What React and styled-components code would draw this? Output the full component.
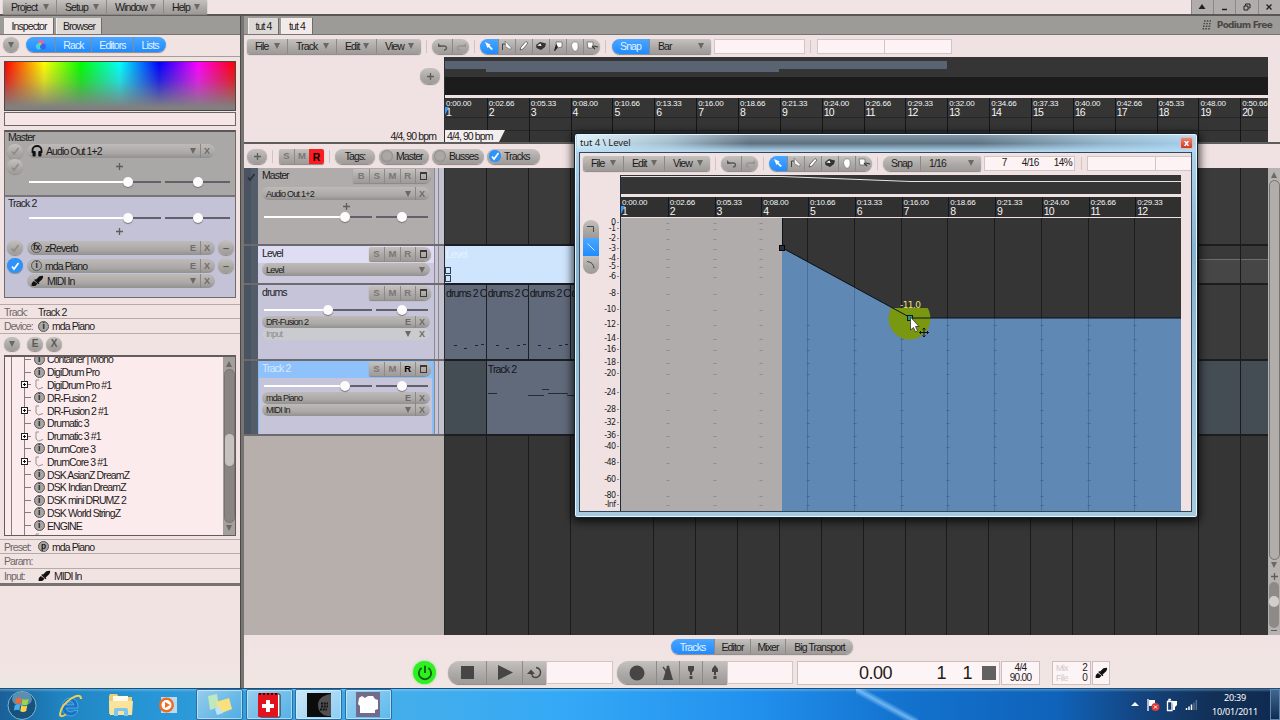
import React from "react";
import styled, { createGlobalStyle, css } from "styled-components";

const GlobalStyle = createGlobalStyle`
  * {
    box-sizing: border-box;
  }
  body {
    margin: 0;
    overflow: hidden;
    background: #f1e3e3;
    font-family: "Liberation Sans", Arial, sans-serif;
    font-size: 10.5px;
    letter-spacing: -0.9px;
    line-height: 12px;
    color: #1d1b1b;
    white-space: nowrap;
  }
  svg {
    display: block;
    flex: none;
  }
`;

const grey = "linear-gradient(#c4c1bf, #aaa7a5 60%, #9d9a98)";
const blue = "linear-gradient(#4ba6ff, #1f8cff)";

const Screen = styled.div`
  position: relative;
  display: flex;
  flex-direction: column;
  width: 1280px;
  height: 720px;
  overflow: hidden;
`;

/* shared parts */

const Gap = styled.div`
  flex: none;
  width: ${(p) => p.$w || 0}px;
  height: ${(p) => p.$h || 0}px;
`;

const Divider = styled.div`
  flex: none;
  width: 1px;
  height: 13px;
  background: #cfc4c4;
  margin-left: ${(p) => p.$left || 0}px;
  margin-right: ${(p) => p.$right || 0}px;
`;

const Arrow = styled.span`
  flex: none;
  width: 0;
  height: 0;
  border: 3.5px solid transparent;
  border-top: 6px solid ${(p) => p.$color || "#6b6866"};
  border-bottom: 0;
`;

const Group = styled.div`
  display: flex;
  flex: none;
  height: ${(p) => p.$h || 15}px;
  border-radius: ${(p) => p.$radius || "8px"};
  overflow: hidden;
  box-shadow: 0 1px 1px #8b8785;
`;

const Segment = styled.div`
  display: flex;
  align-items: center;
  justify-content: ${(p) => (p.$spread ? "space-between" : "center")};
  flex: none;
  width: ${(p) => p.$w}px;
  padding: ${(p) => (p.$spread ? "0 7px 0 8px" : 0)};
  background: ${(p) => (p.$active ? blue : grey)};
  color: ${(p) => (p.$active ? "#e4f1ff" : "#1d1b1b")};

  & + & {
    border-left: 1px solid ${(p) => (p.$active ? "#60adff" : "#8c8987")};
  }
`;

const Round = styled.div`
  display: flex;
  align-items: center;
  justify-content: center;
  flex: none;
  width: ${(p) => p.$w || 16}px;
  height: ${(p) => p.$h || 15}px;
  border-radius: 8px;
  background: ${(p) => (p.$on ? "#2d93fb" : grey)};
  color: #5c5957;
  box-shadow: 0 1px 1px #918d8b;
  font-weight: ${(p) => (p.$bold ? "bold" : "normal")};
  font-size: ${(p) => p.$font || 10}px;
  letter-spacing: 0;
`;

const Field = styled.div`
  display: flex;
  align-items: center;
  flex: none;
  width: ${(p) => p.$w}px;
  height: ${(p) => p.$h || 15}px;
  border: 1px solid #d3c5c6;
  background: #fdf2f4;

  & + & {
    border-left: 0;
  }
`;

const SliderTrack = styled.div`
  position: relative;
  flex: none;
  width: ${(p) => p.$w}px;
  height: 2px;
  background: #62616b;
`;

const SliderFill = styled.div`
  width: ${(p) => p.$w}px;
  height: 2px;
  background: #fff;
`;

const Knob = styled.div`
  position: absolute;
  top: -4px;
  left: ${(p) => p.$x - 5}px;
  width: 10px;
  height: 10px;
  border-radius: 5px;
  background: #fdfbfb;
  box-shadow: 0 1px 1px #77747a;
`;

const SliderLine = styled.div`
  display: flex;
  align-items: center;
  flex: none;
  gap: 4px;
  height: 10px;
  margin-left: ${(p) => p.$left}px;
`;

const Slider = ({ w, at, filled }) => (
  <SliderTrack $w={w}>
    {filled && <SliderFill $w={at} />}
    <Knob $x={at} />
  </SliderTrack>
);

const Sliders = ({ left, w, at, w2, at2 }) => (
  <SliderLine $left={left}>
    <Slider w={w} at={at} filled />
    <Slider w={w2} at={at2} />
  </SliderLine>
);

/* icons */

const Check = ({ color = "#fff" }) => (
  <svg width="10" height="10" viewBox="0 0 10 10">
    <path d="M2 5.500 4 8 8.500 2" stroke={color} strokeWidth="1.7" fill="none" />
  </svg>
);

const Plus = () => (
  <svg width="7" height="7" viewBox="0 0 7 7">
    <path d="M3.500 0V7M0 3.500H7" stroke="#5f5c5b" strokeWidth="1.3" />
  </svg>
);

const PlugIcon = () => (
  <svg width="13" height="12" viewBox="0 0 14 12">
    <path d="M5 5 9 1q3-1 4-.5Q13.500 3 10 6L8 8Z" fill="#111" />
    <path d="M3 6 7 9 5 11Q2 12 .5 11 0 8 3 6Z" fill="#111" />
    <path d="M4 4.500 8.500 9" stroke="#111" strokeWidth="1.5" />
  </svg>
);

const HeadphonesIcon = () => (
  <svg width="12" height="12" viewBox="0 0 12 12">
    <path d="M1.500 8V5a4.500 4 0 0 1 9 0V8" stroke="#111" strokeWidth="1.800" fill="none" />
    <rect x="1.500" y="6" width="3.200" height="5.500" rx="1" fill="#111" />
    <rect x="7.300" y="6" width="3.200" height="5.500" rx="1" fill="#111" />
  </svg>
);

const Badge = styled.span`
  display: flex;
  align-items: center;
  justify-content: center;
  flex: none;
  width: 11px;
  height: 11px;
  border: 1px solid #555;
  border-radius: 6px;
  background: #a9a5a4;
  color: #1b1919;
  font-size: 8.5px;
  font-weight: bold;
  letter-spacing: -0.3px;
  line-height: 9px;
`;

const FolderIcon = () => (
  <svg width="11" height="11" viewBox="0 0 11 11">
    <path d="M2 1V8L4.500 10 9 8.500M2 1H5" stroke="#989292" fill="none" />
  </svg>
);

const UndoIcon = ({ flip, color = "#5c5958" }) => (
  <svg width="11" height="9" viewBox="0 0 11 9">
    <g transform={flip ? "translate(11 0) scale(-1 1)" : undefined}>
      <path d="M2 4H7q2.500 0 2.500 2T7 8" stroke={color} strokeWidth="1.300" fill="none" />
      <path d="M1 1V5H5Z" fill={color} />
    </g>
  </svg>
);

const toolShapes = {
  pointer: <path d="M2 2 7.500 4.500 6.500 5.500 10 9 8.500 10 5.500 7 4.500 8Z" fill="#fff" />,
  range: (
    <>
      <path d="M1.500 4V10M1.500 4H4" stroke="#444" fill="none" />
      <path d="M4 1 10 7.500 9.500 10 7.500 8 5 7.500Z" fill="#fff" stroke="#555" strokeWidth=".5" />
    </>
  ),
  pencil: <path d="M2 10 3 7 8 1.500 10 3 5 9Z" fill="#fff" stroke="#444" strokeWidth=".7" />,
  eraser: (
    <>
      <path d="M1 5 5 2 11 3.500 10 7 6 10 1.500 8Z" fill="#333" />
      <path d="M2 5.500 5.500 3.500 6.500 6Z" fill="#fff" />
    </>
  ),
  brush: (
    <>
      <path d="M4 2H10V7L5 8Z" fill="#fff" stroke="#444" strokeWidth=".6" />
      <path d="M4 4 6 7 3 11H2Z" fill="#222" />
    </>
  ),
  hand: <path d="M2.500 5 4 2H8L9 4V8L7.500 11H5L3 8Z" fill="#fff" stroke="#666" strokeWidth=".5" />,
  zoom: (
    <>
      <path d="M1 2H7V8H2Z" fill="#fff" stroke="#444" strokeWidth=".6" />
      <path d="M6 6 9 9M8 6 12 7" stroke="#333" strokeWidth="1.200" />
    </>
  ),
};

const Tools = ({ names, width }) => (
  <Group>
    {names.map((name, i) => (
      <Segment key={name} $w={i === 0 ? 18 : width} $active={i === 0}>
        <svg width="12" height="12" viewBox="0 0 12 12">
          {toolShapes[name]}
        </svg>
      </Segment>
    ))}
  </Group>
);

const Undo = () => (
  <Group>
    <Segment $w={20}>
      <UndoIcon />
    </Segment>
    <Segment $w={17}>
      <UndoIcon flip color="#979391" />
    </Segment>
  </Group>
);

const Menus = ({ items, radius, h }) => (
  <Group $radius={radius || "3px"} $h={h}>
    {items.map(([label, w]) => (
      <Segment key={label} $w={w} $spread>
        {label}
        <Arrow />
      </Segment>
    ))}
  </Group>
);

/* top of the window */

const MenuBar = styled.div`
  display: flex;
  justify-content: space-between;
  height: 16px;
  padding-left: 3px;
  border-bottom: 2px solid #595756;
  background: #f2e3e5;
`;

const WindowButtons = styled.div`
  display: flex;
`;

const WindowButton = styled.div`
  display: flex;
  align-items: center;
  justify-content: center;
  width: 22.3px;
  height: 14px;
  background: #b0adab;
  border-left: 1px solid #8a8785;
`;

const Workspace = styled.div`
  display: flex;
  height: 672px;
`;

const TabBar = styled.div`
  display: flex;
  align-items: flex-end;
  gap: 2px;
  height: 19px;
  padding-left: 4px;
  background: #9d9b98;
  border-bottom: 1px solid #777472;
`;

const Tab = styled.div`
  width: ${(p) => p.$w}px;
  height: 16px;
  padding-top: 2px;
  text-align: center;
  background: ${(p) => (p.$active ? "#f3eaea" : "#dcd9d7")};
  border-left: 1px solid #f5efef;
  border-right: 1px solid #6e6b69;
`;

const Brand = styled.div`
  display: flex;
  align-items: center;
  gap: 5px;
  height: 18px;
  margin: 0 8px 0 auto;
  font-family: "DejaVu Sans", sans-serif;
  font-size: 9px;
  font-weight: bold;
  letter-spacing: -0.75px;
  color: #4a4846;
`;

/* inspector */

const Inspector = styled.div`
  display: flex;
  flex-direction: column;
  width: 240px;
  background: #f2e3e3;
`;

const Splitter = styled.div`
  width: 4px;
  background: #777472;
  border-left: 1px solid #4b4949;
`;

const InspectorTools = styled.div`
  display: flex;
  align-items: center;
  height: 22px;
  padding: 0 0 2px 3px;
  border-bottom: 1px solid #a69d9d;
`;

const Spectrum = styled.div`
  height: 50px;
  margin: 4px 4px 0;
  border: 1px solid #4b4646;
  background:
    linear-gradient(rgba(128, 128, 128, 0), rgba(128, 128, 128, 0.3) 40%, #808080 95%),
    linear-gradient(90deg, #f00, #ff0 17%, #0f0 33%, #0ff 50%, #00f 67%, #f0f 84%, #f00);
`;

const Swatch = styled.div`
  height: 14px;
  margin: 1px 4px 4px;
  border: 1px solid #6c6666;
  background: #f5e5e6;
`;

const Chain = styled.div`
  flex: none;
  height: 168px;
  margin: 0 4px;
  border: 1px solid #6f6b6b;
  border-top: 2px solid #5a5757;
  background: #c3c2d6;
`;

const ChainPart = styled.div`
  height: ${(p) => p.$h}px;
  padding: 0 2px;
  background: ${(p) => p.$bg};
  border-bottom: ${(p) => (p.$line ? "2px solid #77757a" : 0)};
`;

const ChainTitle = styled.div`
  height: 12px;
  padding-left: 1px;
  line-height: 11px;
`;

const ChainRow = styled.div`
  display: flex;
  align-items: center;
  height: ${(p) => p.$h}px;
`;

const Slot = styled.div`
  display: flex;
  align-items: center;
  gap: 3px;
  flex: none;
  width: ${(p) => p.$w || 188}px;
  height: ${(p) => p.$h || 14}px;
  margin-left: ${(p) => p.$left ?? 4}px;
  padding-left: 4px;
  border-radius: 7px;
  background: ${(p) => (p.$empty ? "#c9cbce" : "linear-gradient(#bdbab8, #aaa7a6 65%, #929090)")};
  color: ${(p) => (p.$empty ? "#8d8b90" : "#1b1919")};
  font-size: ${(p) => (p.$small ? 9 : 10.5)}px;
  letter-spacing: ${(p) => (p.$small ? -0.75 : -0.9)}px;
`;

const SlotKey = styled.span`
  display: flex;
  align-items: center;
  justify-content: center;
  width: 15px;
  height: 100%;
  padding-right: ${(p) => p.$right || 0}px;
  margin-left: ${(p) => (p.$first ? "auto" : "-3px")};
  color: #6d6a69;
  font-weight: bold;
  font-size: 9px;
  letter-spacing: 0;
  border-left: 1px solid ${(p) => (p.$first || p.$plain ? "transparent" : "#8a8786")};
`;

const ChainSlot = ({ icon, label, edit, on, knob = true, minus }) => (
  <>
    {knob ? (
      <Round $on={on}>
        <Check color={on ? "#fff" : "#8e8b8a"} />
      </Round>
    ) : (
      <Gap $w={16} />
    )}
    <Slot>
      {icon}
      {label}
      <SlotKey $first>{edit ? "E" : <Arrow />}</SlotKey>
      <SlotKey $right={2}>X</SlotKey>
    </Slot>
    {minus && (
      <>
        <Gap $w={3} />
        <Round $bold $font={11}>
          –
        </Round>
      </>
    )}
  </>
);

const InfoRow = styled.div`
  display: flex;
  align-items: center;
  flex: none;
  gap: 3px;
  height: ${(p) => p.$h || 14}px;
  padding-left: 4px;
  border-top: 1px solid #b9aaaa;
`;

const InfoLabel = styled.span`
  width: 31px;
  color: #6f6768;
`;

const Tree = styled.div`
  display: flex;
  flex: none;
  height: 181px;
  margin: 1px 4px 3px;
  border: 1px solid #625c5c;
  border-top-width: 2px;
  background: #fbebed;
  overflow: hidden;
`;

const TreeGutter = styled.div`
  width: 7px;
  border-right: 1px solid #857d7d;
`;

const TreeBody = styled.div`
  flex: 1;
  margin: -4px 0 0 12px;
  border-left: 1px solid #857d7d;
`;

const TreeRow = styled.div`
  display: flex;
  align-items: center;
  gap: 2.5px;
  height: 12.8px;
`;

const TreeBranch = styled.div`
  width: 6px;
  height: 1px;
  background: #857d7d;
`;

const Expander = styled.div`
  display: flex;
  align-items: center;
  justify-content: center;
  flex: none;
  width: 7px;
  height: 7px;
  margin: 0 -5.5px 0 -4px;
  border: 1px solid #222;
  background: #fff;
  z-index: 1;
`;

const devices = [
  ["Container | Mono"],
  ["DigiDrum Pro"],
  ["DigiDrum Pro #1", true],
  ["DR-Fusion 2"],
  ["DR-Fusion 2 #1", true],
  ["Drumatic 3"],
  ["Drumatic 3 #1", true],
  ["DrumCore 3"],
  ["DrumCore 3 #1", true],
  ["DSK AsianZ DreamZ"],
  ["DSK Indian DreamZ"],
  ["DSK mini DRUMZ 2"],
  ["DSK World StringZ"],
  ["ENGINE"],
  ["ENGINE #1", true],
];

const ScrollBar = styled.div`
  display: flex;
  flex-direction: column;
  align-items: center;
  flex: none;
  width: 12px;
  padding: 4px 0;
  background: ${(p) => p.$bg || "#a29f9d"};
`;

const ScrollArrow = styled.div`
  width: 0;
  height: 0;
  border: 3.5px solid transparent;
  border-${(p) => (p.$up ? "bottom" : "top")}: 6px solid #6b6866;
  border-${(p) => (p.$up ? "top" : "bottom")}: 0;
`;

const ScrollLane = styled.div`
  flex: 1;
  width: 11px;
  margin: 2px 0;
  padding-top: ${(p) => p.$top || 0}px;
  border-radius: 6px;
  background: ${(p) => p.$bg || "#898583"};
  border: 1px solid #777371;
`;

const ScrollThumb = styled.div`
  height: ${(p) => p.$h}px;
  border-radius: 5px;
  background: #c6c2c0;
`;

const EmptyPanel = styled.div`
  flex: 1;
  border-top: 3px solid #777272;
  background: linear-gradient(#f2e3e3 80%, #e9e8e1);
`;

const InspectorPanel = () => (
  <Inspector>
    <TabBar>
      <Tab $w={50} $active>
        Inspector
      </Tab>
      <Tab $w={46}>Browser</Tab>
    </TabBar>
    <InspectorTools>
      <Round>
        <Arrow />
      </Round>
      <Gap $w={7} />
      <Group>
        <Segment $w={29} $active>
          <svg width="12" height="12" viewBox="0 0 12 12">
            <circle cx="6" cy="4" r="3" fill="#f35bb0" />
            <circle cx="4" cy="7.500" r="3" fill="#37d9e4" />
            <circle cx="8" cy="7.500" r="3" fill="#3967f0" />
            <circle cx="5" cy="5" r="1.500" fill="#75e35b" />
          </svg>
        </Segment>
        <Segment $w={36} $active>
          Rack
        </Segment>
        <Segment $w={42} $active>
          Editors
        </Segment>
        <Segment $w={33} $active>
          Lists
        </Segment>
      </Group>
    </InspectorTools>
    <Spectrum />
    <Swatch />
    <Chain>
      <ChainPart $h={65} $bg="#aaa7a7" $line>
        <ChainTitle>Master</ChainTitle>
        <ChainRow $h={14}>
          <ChainSlot icon={<HeadphonesIcon />} label="Audio Out 1+2" />
        </ChainRow>
        <ChainRow $h={17}>
          <Round>
            <Check color="#8e8b8a" />
          </Round>
          <Gap $w={93} />
          <Plus />
        </ChainRow>
        <Gap $h={2} />
        <Sliders left={22} w={132} at={99} w2={65} at2={33} />
      </ChainPart>
      <ChainPart $h={100} $bg="#c3c2d6">
        <Gap $h={1} />
        <ChainTitle>Track 2</ChainTitle>
        <Gap $h={3} />
        <Sliders left={22} w={132} at={99} w2={65} at2={33} />
        <ChainRow $h={17}>
          <Gap $w={109} />
          <Plus />
        </ChainRow>
        <ChainRow $h={15}>
          <ChainSlot icon={<Badge>fx</Badge>} label="zReverb" edit minus />
        </ChainRow>
        <Gap $h={3} />
        <ChainRow $h={15}>
          <ChainSlot icon={<Badge>i</Badge>} label="mda Piano" edit on minus />
        </ChainRow>
        <ChainRow $h={15}>
          <ChainSlot icon={<PlugIcon />} label="MIDI In" knob={false} />
        </ChainRow>
      </ChainPart>
    </Chain>
    <Gap $h={6} />
    <InfoRow>
      <InfoLabel>Track:</InfoLabel>
      Track 2
    </InfoRow>
    <InfoRow $h={15}>
      <InfoLabel>Device:</InfoLabel>
      <Badge>i</Badge>
      mda Piano
    </InfoRow>
    <InfoRow $h={21}>
      <Round $h={14}>
        <Arrow />
      </Round>
      <Gap $w={1} />
      <Round $h={14} $bold>
        E
      </Round>
      <Round $h={14} $bold>
        X
      </Round>
    </InfoRow>
    <Tree>
      <TreeGutter />
      <TreeBody>
        {devices.map(([name, folder]) => (
          <TreeRow key={name}>
            {folder ? (
              <Expander>
                <svg width="5" height="5">
                  <path d="M2.500 1V4M1 2.500H4" stroke="#111" />
                </svg>
              </Expander>
            ) : null}
            <TreeBranch />
            {folder ? <FolderIcon /> : <Badge>i</Badge>}
            {name}
          </TreeRow>
        ))}
      </TreeBody>
      <ScrollBar>
        <ScrollArrow $up />
        <ScrollLane $top={64}>
          <ScrollThumb $h={32} />
        </ScrollLane>
        <ScrollArrow />
      </ScrollBar>
    </Tree>
    <InfoRow>
      <InfoLabel>Preset:</InfoLabel>
      <Badge>p</Badge>
      mda Piano
    </InfoRow>
    <InfoRow $h={15}>
      <InfoLabel>Param:</InfoLabel>
    </InfoRow>
    <InfoRow $h={15}>
      <InfoLabel>Input:</InfoLabel>
      <PlugIcon />
      MIDI In
    </InfoRow>
    <EmptyPanel />
  </Inspector>
);

/* arrangement */

const Main = styled.div`
  display: flex;
  flex-direction: column;
  width: 1036px;
  background: #f0e2e2;
`;

const Toolbar = styled.div`
  display: flex;
  align-items: center;
  flex: none;
  height: ${(p) => p.$h}px;
  padding-left: ${(p) => p.$left}px;
`;

const Timeline = styled.div`
  display: flex;
  flex: none;
  height: 87px;
  border-bottom: 2px solid #5f5c5c;
`;

const TimelineHead = styled.div`
  display: flex;
  flex-direction: column;
  justify-content: space-between;
  align-items: flex-end;
  width: 200px;
  padding: 11px 4px 0 0;
`;

const HeadTempo = styled.span`
  padding-right: 4px;
`;

const TimelineBody = styled.div`
  width: 824px;
  border-left: 1px solid #2b3038;
`;

const Overview = styled.div`
  height: 38px;
  padding-top: 4px;
  background: linear-gradient(#353535 20px, #1c1c1c 20px);
`;

const OverviewClips = styled.div`
  display: flex;
  align-items: flex-start;
`;

const OverviewClip = styled.div`
  width: ${(p) => p.$w}px;
  height: ${(p) => p.$h}px;
  background: #596371;
`;

const Ruler = styled.div`
  position: relative;
  display: flex;
  height: ${(p) => p.$h}px;
  margin-top: 3px;
  overflow: hidden;
  background: ${(p) =>
    p.$lined
      ? "linear-gradient(#353535 19px, #262626 19px 20px, #353535 20px 32px, #262626 32px 33px, #353535 33px)"
      : "#303030"};
`;

const RulerCell = styled.div`
  flex: none;
  width: ${(p) => p.$w}px;
  padding: 2px 0 0 1px;
  border-left: 1px solid #161616;
  color: #f4f4f4;
  line-height: 9px;

  &:first-child {
    border-left: 0;
  }
`;

const RulerTime = styled.div`
  font-size: 8px;
  letter-spacing: -0.2px;
  line-height: 8px;
`;

const Playhead = styled.div`
  position: absolute;
  left: 0;
  top: 9px;
  border-top: 8px solid #3c97f5;
  border-right: 4px solid transparent;
`;

const Tempo = styled.div`
  position: absolute;
  left: 0;
  bottom: 0;
  width: 60px;
  height: 12px;
  padding-left: 2px;
  clip-path: polygon(0 0, 100% 0, 90% 100%, 0 100%);
  background: #f3eeee;
`;

const formatTime = (bar) => {
  const cents = Math.floor((bar * 800) / 3);
  return `0:${String(Math.floor(cents / 100)).padStart(2, "0")}.${String(cents % 100).padStart(2, "0")}`;
};

const RulerCells = ({ count, w }) =>
  Array.from({ length: count }, (_, i) => (
    <RulerCell key={i} $w={w}>
      <RulerTime>{formatTime(i)}</RulerTime>
      {i + 1}
    </RulerCell>
  ));

const Arrangement = styled.div`
  display: flex;
  height: 467px;
`;

const TrackList = styled.div`
  width: 200px;
  background: #b7afac;
`;

const Track = styled.div`
  display: flex;
  height: ${(p) => p.$h}px;
  border-bottom: 2px solid #6c6a6d;
`;

const TrackStrip = styled.div`
  display: flex;
  justify-content: center;
  width: 14px;
  padding-top: 4px;
  background: linear-gradient(90deg, #4a5361 7px, #535c69 7px);
`;

const TrackBody = styled.div`
  width: 176px;
  background: ${(p) => p.$bg};
  ${(p) =>
    p.$selected &&
    css`
      border-right: 2px solid #88bdf5;
      border-left: 1px solid #88bdf5;
    `}
`;

const TrackHeader = styled.div`
  display: flex;
  justify-content: space-between;
  height: 17px;
  padding: 1px ${(p) => (p.$selected ? 1 : 3)}px 0 ${(p) => (p.$selected ? 3 : 4)}px;
  background: ${(p) => p.$bg};
  color: ${(p) => (p.$selected ? "#d5ebff" : "#1d1b1b")};
`;

const TrackKey = styled(Segment)`
  color: ${(p) => (p.$hot ? "#000" : "#7a7675")};
  font-weight: bold;
  font-size: 9.5px;
  letter-spacing: 0;
`;

const TrackName = styled.span`
  line-height: 13px;
`;

const PageIcon = styled.span`
  width: 7px;
  height: 8px;
  border: 1px solid #3b3938;
  border-top-width: 2px;
`;

const Meter = styled.div`
  width: 10px;
  border-left: 1px solid #8a8895;
  background: linear-gradient(90deg, #c9c6d6 3px, #8a8895 3px, #8a8895 4px, #c5c2cf 4px);
`;

const MidRow = styled.div`
  display: flex;
  justify-content: center;
  align-items: center;
  height: ${(p) => p.$h}px;
`;

const TrackItem = ({ name, h, bg, headBg, selected, keys, hot, mark, children }) => (
  <Track $h={h}>
    <TrackStrip>{mark && <Check color="#2b313b" />}</TrackStrip>
    <TrackBody $bg={bg} $selected={selected}>
      <TrackHeader $bg={headBg || bg} $selected={selected}>
        <TrackName>{name}</TrackName>
        <Group $radius="2px 8px 8px 2px" $h={14}>
          {keys.map((k) => (
            <TrackKey key={k} $w={15.4} $hot={hot === k}>
              {k}
            </TrackKey>
          ))}
          <TrackKey $w={16}>
            <PageIcon />
          </TrackKey>
        </Group>
      </TrackHeader>
      {children}
    </TrackBody>
    <Meter />
  </Track>
);

const TrackSlot = ({ label, edit, empty, single, left = 4, h = 12 }) => (
  <Slot $w={168} $h={h} $left={left} $small $empty={empty}>
    {label}
    <SlotKey $first>{edit ? "E" : single ? null : <Arrow />}</SlotKey>
    <SlotKey $right={2} $plain={single || empty}>
      {single ? <Arrow /> : "X"}
    </SlotKey>
  </Slot>
);

const RecordKey = styled.div`
  width: 15px;
  background: #fb1c1f;
  color: #000;
  font-weight: bold;
  line-height: 16px;
  letter-spacing: 0;
  text-align: center;
`;

const TagPill = styled.div`
  display: flex;
  align-items: center;
  gap: 3px;
  width: ${(p) => p.$w}px;
  height: 15px;
  margin-right: 3px;
  padding-left: 2px;
  border-radius: 8px;
  background: ${grey};
  box-shadow: 0 1px 1px #8b8785;
`;

const TagDot = styled.span`
  display: flex;
  align-items: center;
  justify-content: center;
  width: 12px;
  height: 12px;
  border-radius: 6px;
  background: ${(p) => (p.$on ? "#2d93fb" : "#aaa7a5")};
  box-shadow: inset 0 0 1px 1px ${(p) => (p.$on ? "#2d93fb" : "#918e8c")};
`;

const Grid = styled.div`
  width: 824px;
  border-left: 1px solid #26282b;
  background: #353535;
`;

const Lane = styled.div`
  display: flex;
  height: ${(p) => p.$h}px;
  border-bottom: ${(p) => (p.$last ? 0 : "2px solid #1b1d20")};
  background:
    repeating-linear-gradient(90deg, transparent 0 40.9px, #1b1b1b 40.9px 41.87px),
    ${(p) => p.$bg};
`;

const Clip = styled.div`
  flex: none;
  width: ${(p) => p.$w}px;
  padding: 2px 0 0 1px;
  border-right: 1px solid #1c2028;
  background: ${(p) => p.$bg || "#616a7b"};
  color: ${(p) => p.$color || "#11141a"};
  overflow: hidden;
`;

const AutomationBox = styled.div`
  width: 6px;
  height: 7px;
  margin: ${(p) => p.$top}px 0 0 -1px;
  border: 1px solid #2c3e50;
`;

const drumHits = [
  [8, 46],
  [18, 49],
  [29, 46],
  [35, 45],
];

const DrumNotes = () => (
  <svg width="40" height="56" viewBox="0 0 40 56">
    {drumHits.map(([x, y]) => (
      <rect key={x} x={x} y={y} width="3" height="1" fill="#1e232c" />
    ))}
  </svg>
);

/* level editor window */

const Dialog = styled.div`
  position: absolute;
  left: 574px;
  top: 133px;
  display: flex;
  flex-direction: column;
  width: 624px;
  height: 385px;
  padding: 1px 5px 5px 4px;
  border: 1px solid #14212c;
  border-radius: 3px;
  background: linear-gradient(#b9d9ee, #86b3cf 30%, #a7cadf);
  box-shadow: inset 0 0 0 1px #e3f5ff, 0 2px 8px 2px rgba(0, 0, 0, 0.7);
`;

const DialogTitle = styled.div`
  display: flex;
  justify-content: space-between;
  align-items: center;
  flex: none;
  height: 17px;
  margin: 0 -3px 0 -2px;
  padding: 0 2px 2px 3px;
  font-family: "Noto Sans", sans-serif;
  font-size: 9.5px;
  letter-spacing: -0.1px;
  background: linear-gradient(rgba(255, 255, 255, 0.25), rgba(200, 230, 255, 0) 50%, #b6dcf5),
    linear-gradient(90deg, #d7edf7, #a3bdcd 15%, #5d7182 28%, #5d7485 65%, #8fb2c8 85%, #a5d0ec);
`;

const CloseButton = styled.div`
  width: 13px;
  height: 12px;
  border: 1px solid #f0b5a8;
  border-radius: 2px;
  background: linear-gradient(#e58a77, #cc3a22);
  color: #fff;
  font-weight: bold;
  font-size: 9px;
  line-height: 9px;
  text-align: center;
`;

const DialogBody = styled.div`
  display: flex;
  flex-direction: column;
  flex: 1;
  border: 1px solid #33475a;
  background: #f0e2e2;
  overflow: hidden;
`;

const EditorColumns = styled.div`
  display: flex;
  flex: 1;
  padding-top: 2px;
`;

const EditorSide = styled.div`
  display: flex;
  justify-content: space-between;
  width: 40px;
  padding: 45px 0 0 3px;
`;

const CurveModes = styled.div`
  display: flex;
  flex-direction: column;
  width: 16px;
  height: 54px;
  border-radius: 8px;
  overflow: hidden;
`;

const CurveMode = styled.div`
  display: flex;
  align-items: center;
  justify-content: center;
  height: 18px;
  background: ${(p) => (p.$active ? blue : grey)};
`;

const ScaleBox = styled.div`
  padding-top: 0;
  margin-top: -3px;
`;

const EditorMain = styled.div`
  width: 561px;
  border-left: 1px solid #1c2a3a;
`;

const levels = [
  ["0", 223], ["-1", 229], ["-2", 239], ["-3", 248.5], ["-4", 258.5], ["-5", 267],
  ["-6", 277], ["-8", 294], ["-10", 310], ["-12", 325], ["-14", 339], ["-16", 350],
  ["-18", 363], ["-20", 374], ["-24", 393], ["-28", 410], ["-32", 423], ["-36", 436],
  ["-40", 447], ["-48", 463], ["-60", 480], ["-80", 496], ["-Inf", 505],
];

const beat = 46.75;

const LevelScale = () => (
  <svg width="21" height="293" viewBox="0 0 21 293">
    {levels.map(([label, y]) => (
      <g key={label}>
        <text x="16.500" y={y - 215} textAnchor="end" fontSize="8" fill="#222" fontFamily="DejaVu Sans, sans-serif" letterSpacing="-0.6">
          {label}
        </text>
        <path d={`M18 ${Math.round(y) - 217.5}H20`} stroke="#888" />
      </g>
    ))}
  </svg>
);

const Curve = () => (
  <svg width="560" height="293" viewBox="0 0 560 293">
    <clipPath id="spot">
      <rect x="260" y="90" width="60" height="40" />
    </clipPath>
    <rect width="560" height="293" fill="#353535" />
    {Array.from({ length: 12 }, (_, i) => (
      <path key={i} d={`M${Math.round(i * beat) - 0.5} 0V293`} stroke="#1c1c1c" />
    ))}
    <rect width="161" height="293" fill="#b0acab" />
    <path d="M161 30 290 100H560V293H161Z" fill="#5f88b4" />
    {Array.from({ length: 11 }, (_, i) => {
      const x = Math.round((i + 1) * beat) - 0.5;
      const dark = x > 161;
      return (
        <g key={i}>
          {dark && <path d={`M${x} ${x > 290 ? 100 : 30 + (x - 161) * 0.543}V293`} stroke="#4a709a" />}
          {levels
            .filter(([, y]) => !dark || y > 320)
            .map(([label, y]) => (
              <path key={label} d={`M${x - 1} ${Math.round(y) - 217.5}h3`} stroke={dark ? "#436890" : "#918c8b"} />
            ))}
        </g>
      );
    })}
    <circle cx="288.500" cy="100.500" r="21" fill="#7a9712" clipPath="url(#spot)" />
    <path d="M161.500 0V30L290 100H560" stroke="#0d1117" fill="none" />
    <rect x="158.500" y="27.500" width="5" height="5" fill="#2c3138" stroke="#050505" />
    <rect x="286.500" y="97.500" width="5" height="5" fill="#2f9b8b" stroke="#06211c" />
    <text x="279" y="90" fontSize="9" fill="#e9e070" fontFamily="DejaVu Sans, sans-serif" letterSpacing="-0.6">
      -11.0
    </text>
    <path d="M289.500 99V112L292.500 109.500 294.500 114 296.500 113 294.500 108.500H298Z" fill="#fff" stroke="#222" strokeWidth=".7" />
    <path d="M303 110V119M298.500 114.500H307.500M301.500 111.500 303 110l1.500 1.500M301.500 117.500 303 119l1.500-1.500M300 113l-1.500 1.500 1.500 1.500M306 113l1.500 1.500-1.500 1.500" stroke="#111" fill="none" />
  </svg>
);

const Numbers = styled.div`
  display: flex;
  justify-content: flex-end;
  width: 100%;
  gap: 15px;
  padding-right: 2px;
  font-size: 10px;
  letter-spacing: -0.6px;
`;

const LevelEditor = () => (
  <Dialog>
    <DialogTitle>
      tut 4 \ Level
      <CloseButton>x</CloseButton>
    </DialogTitle>
    <DialogBody>
      <Toolbar $h={20} $left={3}>
        <Menus items={[["File", 40], ["Edit", 41], ["View", 46]]} />
        <Divider $left={5} $right={5} />
        <Undo />
        <Divider $left={5} $right={5} />
        <Tools names={["pointer", "range", "pencil", "eraser", "hand", "zoom"]} width={17} />
        <Divider $left={5} $right={5} />
        <Group $radius="8px 2px 2px 8px">
          <Segment $w={37}>Snap</Segment>
          <Segment $w={61} $spread>
            1/16
            <Arrow />
          </Segment>
        </Group>
        <Gap $w={3} />
        <Field $w={91}>
          <Numbers>
            <span>7</span>
            <span>4/16</span>
            <span>14%</span>
          </Numbers>
        </Field>
        <Divider $left={6} $right={5} />
        <Field $w={69} />
        <Field $w={40} />
      </Toolbar>
      <EditorColumns>
        <EditorSide>
          <CurveModes>
            <CurveMode>
              <svg width="10" height="10" viewBox="0 0 10 10">
                <path d="M1 2.500H7.500V8" stroke="#4b4847" fill="none" />
              </svg>
            </CurveMode>
            <CurveMode $active>
              <svg width="10" height="10" viewBox="0 0 10 10">
                <path d="M1.500 1.500 8.500 8.500" stroke="#cfe7ff" />
              </svg>
            </CurveMode>
            <CurveMode>
              <svg width="10" height="10" viewBox="0 0 10 10">
                <path d="M1 1.500Q7.500 2 8 8.500" stroke="#4b4847" fill="none" />
              </svg>
            </CurveMode>
          </CurveModes>
          <ScaleBox>
            <LevelScale />
          </ScaleBox>
        </EditorSide>
        <EditorMain>
          <svg width="560" height="19" viewBox="0 0 560 19">
            <rect width="560" height="19" fill="#353535" />
            <path d="M0 1.500H161L290 6.500H560" stroke="#e4e4e4" fill="none" />
          </svg>
          <Ruler $h={20}>
            <RulerCells count={12} w={beat} />
            <Playhead />
          </Ruler>
          <Gap $h={1} />
          <Curve />
        </EditorMain>
      </EditorColumns>
    </DialogBody>
  </Dialog>
);

/* bottom transport */

const Footer = styled.div`
  flex: 1;
  display: flex;
  flex-direction: column;
  background: linear-gradient(#f0e2e2, #f1e6e4);
`;

const Transport = styled.div`
  display: flex;
  align-items: center;
  height: 25px;
  margin-top: 6px;
  padding-left: 169px;
`;

const Power = styled.div`
  display: flex;
  align-items: center;
  justify-content: center;
  width: 23px;
  height: 23px;
  border-radius: 12px;
  background: #2df11f;
  box-shadow: 0 0 3px #8fd48b;
`;

const Position = styled.div`
  display: flex;
  align-items: center;
  justify-content: flex-end;
  width: 203px;
  height: 24px;
  margin-left: 4px;
  padding-right: 3px;
  border: 1px solid #cdbfc0;
  background: #fdf4f5;
  font-size: 18px;
  letter-spacing: -0.5px;
`;

const PositionPart = styled.span`
  width: ${(p) => p.$w}px;
  text-align: right;
`;

const StopMark = styled.span`
  width: 14px;
  height: 14px;
  margin-left: 10px;
  background: #626060;
`;

const Readout = styled.div`
  width: ${(p) => p.$w}px;
  height: 24px;
  margin-left: ${(p) => p.$left}px;
  padding: 1px 3px 0 ${(p) => p.$pad ?? 3}px;
  border: 1px solid #cdbfc0;
  background: #fdf4f5;
  font-size: 10px;
  letter-spacing: -0.7px;
  line-height: 10.5px;
  text-align: center;
`;

const ReadoutLine = styled.div`
  display: flex;
  justify-content: space-between;
`;

const Muted = styled.span`
  color: #d5c9ca;
  font-size: 9px;
`;

const TransportBar = () => (
  <Footer>
    <Gap $h={4} />
    <Toolbar $h={15} $left={427}>
      <Group>
        <Segment $w={43} $active>
          Tracks
        </Segment>
        <Segment $w={36}>Editor</Segment>
        <Segment $w={35}>Mixer</Segment>
        <Segment $w={68}>Big Transport</Segment>
      </Group>
    </Toolbar>
    <Transport>
      <Power>
        <svg width="18" height="18" viewBox="0 0 16 16">
          <path d="M8 1.500V8M5 3.500A5.500 5.500 0 1 0 11 3.500" stroke="#0f5a10" strokeWidth="1.600" fill="none" />
        </svg>
      </Power>
      <Gap $w={12} />
      <Group $h={23} $radius="12px 0 0 12px">
        <Segment $w={38}>
          <svg width="13" height="13">
            <rect width="13" height="13" fill="#484645" />
          </svg>
        </Segment>
        <Segment $w={36}>
          <svg width="16" height="15">
            <path d="M1 0 16 7.500 1 15Z" fill="#484645" />
          </svg>
        </Segment>
        <Segment $w={24}>
          <svg width="16" height="15" viewBox="0 0 16 15">
            <path d="M9 2.500A5 5 0 1 1 5 11" stroke="#484645" strokeWidth="1.500" fill="none" />
            <path d="M0 9 4 4.500 8 9H5.500L7 12 3 9Z" fill="#484645" />
          </svg>
        </Segment>
      </Group>
      <Field $w={67} $h={23} />
      <Gap $w={4} />
      <Group $h={23} $radius="12px 0 0 12px">
        <Segment $w={39}>
          <svg width="16" height="16">
            <circle cx="8" cy="8" r="7.500" fill="#484645" />
          </svg>
        </Segment>
        <Segment $w={23}>
          <svg width="12" height="15" viewBox="0 0 12 15">
            <path d="M4.500 3H7.500L11 15H1Z" fill="#484645" />
            <path d="M1 2 6 9" stroke="#484645" strokeWidth="1.300" />
            <circle cx="6" cy="2" r="1.500" fill="#484645" />
          </svg>
        </Segment>
        <Segment $w={23}>
          <svg width="8" height="15" viewBox="0 0 8 15">
            <path d="M1 1H7V5L4 9 1 5ZM2.500 11H5.500V14H2.500ZM3 7H5V10H3Z" fill="#484645" />
          </svg>
        </Segment>
        <Segment $w={25}>
          <svg width="8" height="15" viewBox="0 0 8 15">
            <path d="M4 0 7 4V7H1V4ZM3 6H5V10H3ZM2.500 11H5.500V14H2.500Z" fill="#484645" />
          </svg>
        </Segment>
      </Group>
      <Field $w={66} $h={23} />
      <Position>
        <PositionPart $w={60}>0.00</PositionPart>
        <PositionPart $w={54}>1</PositionPart>
        <PositionPart $w={26}>1</PositionPart>
        <StopMark />
      </Position>
      <Readout $w={39} $left={1}>
        <div>4/4</div>
        <div>90.00</div>
      </Readout>
      <Readout $w={39} $left={12}>
        <ReadoutLine>
          <Muted>Mix</Muted>2
        </ReadoutLine>
        <ReadoutLine>
          <Muted>File</Muted>0
        </ReadoutLine>
      </Readout>
      <Readout $w={18} $left={1} $pad={2}>
        <Gap $h={4} />
        <PlugIcon />
      </Readout>
    </Transport>
  </Footer>
);

const ScrollLaneSmall = styled.div`
  display: flex;
  align-items: center;
  width: 10px;
  height: 46px;
  margin: 2px 0;
  border-radius: 5px;
  background: #8d8a88;
`;

const ScrollBall = styled.div`
  width: 10px;
  height: 11px;
  margin-bottom: 8px;
  border-radius: 5px;
  background: #d2cecc;
`;

const Minus = styled.div`
  width: 6px;
  height: 1px;
  background: #5f5c5b;
`;

const MainPanel = () => (
  <Main>
    <TabBar>
      <Tab $w={31}>tut 4</Tab>
      <Tab $w={32} $active>
        tut 4
      </Tab>
      <Brand>
        <svg width="10" height="10" viewBox="0 0 10 10">
          {[0, 1, 2, 3].map((r) => (
            <path key={r} d={`M${2 - r * 0.5} ${r * 2.6 + 1}H9`} stroke="#4a4846" strokeWidth="1.400" strokeDasharray="1.600 1.200" />
          ))}
        </svg>
        Podium Free
      </Brand>
    </TabBar>
    <Toolbar $h={22} $left={3}>
      <Menus items={[["File", 40], ["Track", 49], ["Edit", 40], ["View", 45]]} />
      <Divider $left={5} $right={5} />
      <Undo />
      <Divider $left={5} $right={5} />
      <Tools names={["pointer", "range", "pencil", "eraser", "brush", "hand", "zoom"]} width={17} />
      <Divider $left={5} $right={6} />
      <Group $radius="8px 2px 2px 8px">
        <Segment $w={37} $active>
          Snap
        </Segment>
        <Segment $w={62} $spread>
          Bar
          <Arrow />
        </Segment>
      </Group>
      <Gap $w={3} />
      <Field $w={91} />
      <Divider $left={5} $right={6} />
      <Field $w={68} />
      <Field $w={67} />
    </Toolbar>
    <Timeline>
      <TimelineHead>
        <Round $w={20} $h={16}>
          <Plus />
        </Round>
        <HeadTempo>4/4, 90 bpm</HeadTempo>
      </TimelineHead>
      <TimelineBody>
        <Overview>
          <OverviewClips>
            <OverviewClip $w={41} $h={8} />
            <OverviewClip $w={293} $h={11} />
            <OverviewClip $w={168} $h={8} />
          </OverviewClips>
        </Overview>
        <Ruler $h={44} $lined>
          <RulerCells count={20} w={41.87} />
          <Playhead />
          <Tempo>4/4, 90 bpm</Tempo>
        </Ruler>
      </TimelineBody>
    </Timeline>
    <Toolbar $h={24} $left={3}>
      <Round $w={20}>
        <Plus />
      </Round>
      <Divider $left={5} $right={6} />
      <Group $radius="2px">
        <TrackKey $w={15}>S</TrackKey>
        <TrackKey $w={15}>M</TrackKey>
        <RecordKey>R</RecordKey>
      </Group>
      <Divider $left={5} $right={5} />
      <Group>
        <Segment $w={40}>Tags:</Segment>
      </Group>
      <Gap $w={4} />
      {[
        ["Master", 50],
        ["Busses", 52],
        ["Tracks", 53, true],
      ].map(([label, w, on]) => (
        <TagPill key={label} $w={w}>
          <TagDot $on={on}>{on && <Check />}</TagDot>
          {label}
        </TagPill>
      ))}
    </Toolbar>
    <Arrangement>
      <TrackList>
        <TrackItem name="Master" h={78} bg="#b0acac" keys={["B", "S", "M", "R"]} mark>
          <Gap $h={2} />
          <TrackSlot label="Audio Out 1+2" h={13} />
          <MidRow $h={12}>
            <Plus />
          </MidRow>
          <Sliders left={6} w={108} at={81} w2={52} at2={26} />
        </TrackItem>
        <TrackItem name="Level" h={39} bg="#ccc9de" headBg="#deddf3" keys={["S", "M", "R"]}>
          <TrackSlot label="Level" single h={13} />
        </TrackItem>
        <TrackItem name="drums" h={76} bg="#c5c4d8" keys={["S", "M", "R"]}>
          <Gap $h={3} />
          <Sliders left={6} w={108} at={64} w2={52} at2={26} />
          <Gap $h={1} />
          <TrackSlot label="DR-Fusion 2" edit />
          <TrackSlot label="Input" empty />
        </TrackItem>
        <TrackItem name="Track 2" h={75} bg="#c5c4d8" headBg="#8fc2fa" selected keys={["S", "M", "R"]} hot="R">
          <Gap $h={3} />
          <Sliders left={5} w={108} at={81} w2={52} at2={26} />
          <Gap $h={1} />
          <TrackSlot label="mda Piano" edit left={3} />
          <TrackSlot label="MIDI In" left={3} />
        </TrackItem>
      </TrackList>
      <Grid>
        <Lane $h={78} $bg="#3b3b3b" />
        <Lane $h={39} $bg="linear-gradient(#393939 13px, #6d6d6d 13px 14px, #464646 14px)">
          <Clip $w={335} $bg="#cfe5fd" $color="#e6f2ff">
            Level
            <AutomationBox $top={7} />
            <AutomationBox $top={1} />
          </Clip>
        </Lane>
        <Lane $h={76} $bg="#3b3b3b">
          {Array.from({ length: 8 }, (_, i) => (
            <Clip key={i} $w={41.87}>
              drums 2 C
              <DrumNotes />
            </Clip>
          ))}
        </Lane>
        <Lane $h={75} $bg="#444c54">
          <Gap $w={41.87} />
          <Clip $w={460}>
            Track 2
            <svg width="100" height="50" viewBox="0 0 100 50">
              <path d="M-1 18.500H9M40 20.500H56M54 14.500H61M60 18.500H80M79 20.500H90" stroke="#262b34" />
            </svg>
          </Clip>
        </Lane>
        <Lane $h={199} $bg="#353535" $last />
      </Grid>
      <ScrollBar $bg="#b5b2b0">
        <ScrollArrow $up />
        <ScrollLane $bg="#b0adab" />
        <ScrollArrow />
        <Gap $h={5} />
        <Plus />
        <ScrollLaneSmall>
          <ScrollBall />
        </ScrollLaneSmall>
        <Minus />
      </ScrollBar>
    </Arrangement>
    <TransportBar />
  </Main>
);

/* taskbar */

const Taskbar = styled.div`
  display: flex;
  align-items: center;
  height: 32px;
  border-top: 1px solid #1d4f7c;
  background:
    linear-gradient(rgba(190, 235, 255, 0.35), transparent 3px),
    linear-gradient(to top right, transparent 42%, rgba(150, 208, 255, 0.7) 50%, transparent 58%) 856px 0 / 62px 34px no-repeat,
    linear-gradient(90deg, #1a5f98, #1f84c0 60px, #2896d6 150px, #44aeea 400px, #35a9f6 560px, #2291ee 750px, #1373cf 900px, #0f62b8 1060px, #14447f 1140px, #122f55 1215px, #0e2a50);
`;

const TaskIcon = styled.div`
  display: flex;
  align-items: center;
  justify-content: center;
  width: ${(p) => p.$w}px;
`;

const TaskButton = styled.div`
  display: flex;
  align-items: center;
  justify-content: center;
  width: 47px;
  height: 31px;
  margin-right: 2.5px;
  border: 1px solid #2a6ea5;
  border-radius: 2px;
  background: linear-gradient(
    135deg,
    rgba(255, 255, 255, ${(p) => (p.$active ? 0.75 : 0.5)}),
    rgba(190, 230, 250, ${(p) => (p.$active ? 0.6 : 0.2)})
  );
  box-shadow: inset 0 0 0 1px rgba(220, 242, 255, 0.6);
`;

const Tray = styled.div`
  display: flex;
  align-items: center;
  gap: 6.5px;
  margin-left: auto;
`;

const Clock = styled.div`
  width: 48px;
  margin: 0 11px 0 8px;
  color: #fff;
  font-family: "Noto Sans", sans-serif;
  font-size: 9px;
  letter-spacing: -0.2px;
  line-height: 13.5px;
  text-align: center;
`;

const ShowDesktop = styled.div`
  width: 10px;
  height: 31px;
  border: 1px solid #5f86ae;
  background: linear-gradient(#41678f, #102c50);
`;

const TaskbarRow = () => (
  <Taskbar>
    <TaskIcon $w={44}>
      <svg width="30" height="30" viewBox="0 0 30 30">
        <circle cx="15" cy="15.500" r="14" fill="#17527c" stroke="#7fb5d4" />
        <ellipse cx="15" cy="9" rx="10" ry="7" fill="#79a9c4" opacity=".7" />
        <path d="M9 9q3-2 5.500-.5l-1 5.500q-3-1.500-5.500.3Z" fill="#f0683c" />
        <path d="M15.500 9q3 1.500 6-.3l-1 5.800q-3 1.300-6 0Z" fill="#9fd447" />
        <path d="M7.800 15.300q3-1.800 5.500-.3l-1 5.500q-2.500-1.500-5.500.2Z" fill="#48aef0" />
        <path d="M14.200 15.500q3 1.600 6 0l-1 5.500q-3 1.800-6 .2Z" fill="#fdd447" />
      </svg>
    </TaskIcon>
    <TaskIcon $w={52}>
      <svg width="26" height="26" viewBox="0 0 26 26">
        <path d="M21 16H9q1 4 5 4 2 0 3-1.500h4Q19 24 13.500 24 5 23 5 15q1-9 8.500-9 8 1 7.500 10ZM9 13h8q-1-3.500-4-3.500T9 13Z" fill="#1c6fc6" fillRule="evenodd" stroke="#5bbdf2" strokeWidth=".7" />
        <path d="M24 7Q24 1 15 6 4 13 3 22q0 4 6 .5" stroke="#f4cf4e" strokeWidth="2" fill="none" />
      </svg>
    </TaskIcon>
    <TaskIcon $w={49}>
      <svg width="26" height="24" viewBox="0 0 26 24">
        <path d="M1 3 2 1H9L11 4H24V21H1Z" fill="#efcf76" />
        <path d="M5 3H20V12H5Z" fill="#fffbe8" />
        <path d="M1 8H25L24 22H2Z" fill="#fae49d" />
        <path d="M6 23V17q0-2 2-2H18q2 0 2 2V23H16V18H10V23Z" fill="#7fc6ec" />
      </svg>
    </TaskIcon>
    <TaskIcon $w={46}>
      <svg width="20" height="20" viewBox="0 0 20 20">
        <rect x="3" y="2" width="16" height="16" fill="#b7dcef" />
        <circle cx="8.500" cy="10" r="7.500" fill="#f06c22" />
        <circle cx="8.500" cy="10" r="5" fill="#fff" />
        <path d="M7 7 12 10 7 13Z" fill="#f06c22" />
      </svg>
    </TaskIcon>
    <Gap $w={5} />
    <TaskButton>
      <svg width="26" height="22" viewBox="0 0 26 22">
        <path d="M1 2 10 0 12 13 3 16Z" fill="#bfe8bd" />
        <path d="M9 8 22 4 25 15 12 20Z" fill="#f8e17c" />
        <path d="M8 15 12 12 16 19 10 21Z" fill="#bfe3fb" />
      </svg>
    </TaskButton>
    <TaskButton>
      <svg width="24" height="26" viewBox="0 0 24 26">
        <rect x="3" y="2" width="20" height="23" rx="1" fill="#fff" stroke="#222" />
        <rect x="1" y="1" width="20" height="24" rx="1" fill="#e3121d" />
        <path d="M2 2H21" stroke="#300" strokeWidth="2" strokeDasharray="2 2" />
        <path d="M9 8H13V12H17V16H13V20H9V16H5V12H9Z" fill="#fff" />
      </svg>
    </TaskButton>
    <TaskButton $active>
      <svg width="24" height="24" viewBox="0 0 24 24">
        <rect width="24" height="24" fill="#0c0c0d" />
        <path d="M24 1Q11 3 11 12T20 23H24Z" fill="#515154" />
        <path d="M14 10.500H21M14 13.500H21M13 16.500H20" stroke="#111" strokeWidth="2" strokeDasharray="2 .8" />
      </svg>
    </TaskButton>
    <TaskButton>
      <svg width="24" height="25" viewBox="0 0 24 25">
        <rect width="24" height="25" fill="#716c8c" />
        <path d="M3 6 6 4 9 6 12 4 17 4 19 7 22 8V17L19 18V21H4V14L2 12Z" fill="#fff" />
      </svg>
    </TaskButton>
    <Tray>
      <svg width="8" height="5">
        <path d="M4 0 8 4H0Z" fill="#eef6ff" />
      </svg>
      <svg width="14" height="14" viewBox="0 0 14 14">
        <path d="M2 1V13" stroke="#fff" strokeWidth="1.300" />
        <path d="M3 2H9V8H3Z" fill="#fff" />
        <circle cx="9.500" cy="9" r="4" fill="#dc3c36" />
        <path d="M8 7.500 11 10.500M11 7.500 8 10.500" stroke="#fff" />
      </svg>
      <svg width="12" height="14" viewBox="0 0 12 14">
        <path d="M1.500 3.500H6V12.500H1.500ZM3 3V1.500H5" stroke="#fff" fill="none" strokeWidth="1.300" />
        <path d="M6 3H11V7L9 9V12H7V8Z" fill="#fff" />
      </svg>
      <svg width="12" height="12" viewBox="0 0 12 12">
        <path d="M1.500 9V11M4 7.500V11M6.500 5.500V11" stroke="#fff" strokeWidth="1.500" />
        <path d="M9 3.500V11M11.300 1V11" stroke="#5d7896" strokeWidth="1.300" />
      </svg>
      <Clock>
        20:39
        <br />
        10/01/2011
      </Clock>
    </Tray>
    <ShowDesktop />
  </Taskbar>
);

const App = () => (
  <Screen>
    <GlobalStyle />
    <MenuBar>
      <Menus items={[["Project", 53], ["Setup", 50], ["Window", 57], ["Help", 44]]} radius="0" h={14} />
      <WindowButtons>
        <WindowButton>
          <svg width="8" height="6">
            <path d="M4 0 7.500 5H.5Z" fill="#222" />
          </svg>
        </WindowButton>
        <WindowButton>
          <svg width="8" height="8">
            <path d="M1 6.500H6" stroke="#222" strokeWidth="1.500" />
          </svg>
        </WindowButton>
        <WindowButton>
          <svg width="8" height="8">
            <path d="M2.500 2.500V1H7V5H5.500M1 3H5V7H1Z" stroke="#222" fill="none" />
          </svg>
        </WindowButton>
        <WindowButton>
          <svg width="8" height="8">
            <path d="M1.500 1.500 6.500 6.500M6.500 1.500 1.500 6.500" stroke="#222" strokeWidth="1.300" />
          </svg>
        </WindowButton>
      </WindowButtons>
    </MenuBar>
    <Workspace>
      <InspectorPanel />
      <Splitter />
      <MainPanel />
    </Workspace>
    <TaskbarRow />
    <LevelEditor />
  </Screen>
);

export default App;
